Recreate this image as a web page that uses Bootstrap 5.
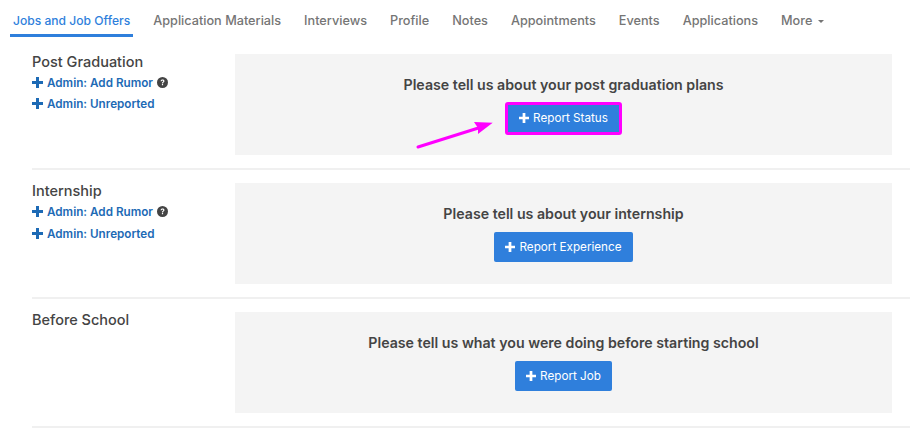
<!DOCTYPE html>
<html lang="en">
<head>
<meta charset="utf-8">
<title>Jobs and Job Offers</title>
<link rel="stylesheet" href="https://cdn.jsdelivr.net/npm/bootstrap@5.3.0/dist/css/bootstrap.min.css">
<style>
html,body{height:447px;overflow:hidden}
body{font-family:"Inter","Liberation Sans",sans-serif;color:#444;background:#fff;font-size:12px}
.tabbar{padding:0 0 0 10px;gap:0;height:37px;flex-wrap:nowrap}
.tabbar .nav-link{font-size:12.7px;font-weight:500;color:#757575;padding:12px 3px 0;height:37px;margin-right:17px;border-bottom:3px solid transparent;white-space:nowrap;line-height:17px}
.tabbar .nav-link.active{font-size:12.1px;color:#2f7fdc;border-bottom-color:#2f7fdc}
.tabbar .caret{display:inline-block;border:3.5px solid transparent;border-top-color:#757575;border-bottom:0;vertical-align:middle;margin-left:2px}
.rowset{padding:17px 8px 0 32px}
.sect{display:flex;border-bottom:2px solid #f0f0f0;padding-bottom:14px;margin-bottom:13px;height:116px}
.sideinfo{width:203px;flex:none}
.sect-title{font-size:14.5px;font-weight:500;color:#444;line-height:17px;margin:-1px 0 4px}
.adminlink{display:block;font-size:11.7px;font-weight:600;color:#1d6ab5;text-decoration:none;line-height:18px;margin-bottom:4px;white-space:nowrap}
.adminlink.snug{margin-bottom:3px}
.adminlink svg{vertical-align:-1px;margin-right:4px}
.adminlink svg.qm{margin:0 0 0 4px;vertical-align:-1px}
.panelbox{flex:none;width:657px;height:101px;background:#f4f4f4;display:flex;flex-direction:column;align-items:center;padding-top:22px;position:relative}
.panelbox h3{font-size:14.2px;font-weight:600;color:#444;line-height:18px;margin:0 0 9px}
.btn-report{background:#2f7fdc;color:#fff;font-size:11.7px;font-weight:400;border:0;border-radius:2px;height:30px;padding:1px 11.5px 0;display:inline-flex;align-items:center;gap:4px;white-space:nowrap}
.btn-report svg{margin-top:-2px}
.btn-report:hover{background:#2f7fdc;color:#fff}
.btn-report.btn-marked{border:3px solid #f0f;border-radius:3px;height:33px;padding:1px 11.5px 0;margin-top:-1px}
.btn-report.btn-marked:hover{border-color:#f0f}
.arrow-note{position:absolute;left:181px;top:64px}
</style>
</head>
<body>
<ul class="nav tabbar">
  <li class="nav-item"><a class="nav-link active" href="#">Jobs and Job Offers</a></li>
  <li class="nav-item"><a class="nav-link" href="#">Application Materials</a></li>
  <li class="nav-item"><a class="nav-link" href="#">Interviews</a></li>
  <li class="nav-item"><a class="nav-link" href="#">Profile</a></li>
  <li class="nav-item"><a class="nav-link" href="#">Notes</a></li>
  <li class="nav-item"><a class="nav-link" href="#">Appointments</a></li>
  <li class="nav-item"><a class="nav-link" href="#">Events</a></li>
  <li class="nav-item"><a class="nav-link" href="#">Applications</a></li>
  <li class="nav-item"><a class="nav-link" href="#">More <span class="caret"></span></a></li>
</ul>
<div class="rowset">
  <section class="sect">
    <div class="sideinfo">
      <h2 class="sect-title">Post Graduation</h2>
      <a class="adminlink snug" href="#"><svg width="11" height="11" viewBox="0 0 11 11"><path d="M4 0h3v4h4v3H7v4H4V7H0V4h4z" fill="currentColor"/></svg>Admin: Add Rumor<svg class="qm" width="11" height="11" viewBox="0 0 11 11"><circle cx="5.5" cy="5.5" r="5.5" fill="#444"/><path d="M3.6 4.3c0-1.2.9-1.8 2-1.8s1.9.6 1.9 1.6c0 1.3-1.4 1.3-1.4 2.3H4.9c0-1.5 1.3-1.5 1.3-2.2 0-.4-.3-.6-.7-.6-.5 0-.7.3-.7.7zM4.9 7h1.2v1.2H4.9z" fill="#fff"/></svg></a>
      <a class="adminlink" href="#"><svg width="11" height="11" viewBox="0 0 11 11"><path d="M4 0h3v4h4v3H7v4H4V7H0V4h4z" fill="currentColor"/></svg>Admin: Unreported</a>
    </div>
    <div class="panelbox">
      <h3>Please tell us about your post graduation plans</h3>
      <button class="btn btn-report btn-marked" type="button"><svg width="10" height="10" viewBox="0 0 11 11"><path d="M4 0h3v4h4v3H7v4H4V7H0V4h4z" fill="currentColor"/></svg>Report Status</button>
      <svg class="arrow-note" width="80" height="34" viewBox="0 0 80 34"><path d="M2 29 L64 9.5" stroke="#f0f" stroke-width="3" stroke-linecap="round"/><path d="M76.7 4.7 L58 4 L62 10 L62 16z" fill="#f0f"/></svg>
    </div>
  </section>
  <section class="sect">
    <div class="sideinfo">
      <h2 class="sect-title">Internship</h2>
      <a class="adminlink" href="#"><svg width="11" height="11" viewBox="0 0 11 11"><path d="M4 0h3v4h4v3H7v4H4V7H0V4h4z" fill="currentColor"/></svg>Admin: Add Rumor<svg class="qm" width="11" height="11" viewBox="0 0 11 11"><circle cx="5.5" cy="5.5" r="5.5" fill="#444"/><path d="M3.6 4.3c0-1.2.9-1.8 2-1.8s1.9.6 1.9 1.6c0 1.3-1.4 1.3-1.4 2.3H4.9c0-1.5 1.3-1.5 1.3-2.2 0-.4-.3-.6-.7-.6-.5 0-.7.3-.7.7zM4.9 7h1.2v1.2H4.9z" fill="#fff"/></svg></a>
      <a class="adminlink" href="#"><svg width="11" height="11" viewBox="0 0 11 11"><path d="M4 0h3v4h4v3H7v4H4V7H0V4h4z" fill="currentColor"/></svg>Admin: Unreported</a>
    </div>
    <div class="panelbox">
      <h3>Please tell us about your internship</h3>
      <button class="btn btn-report" type="button"><svg width="10" height="10" viewBox="0 0 11 11"><path d="M4 0h3v4h4v3H7v4H4V7H0V4h4z" fill="currentColor"/></svg>Report Experience</button>
    </div>
  </section>
  <section class="sect">
    <div class="sideinfo">
      <h2 class="sect-title">Before School</h2>
    </div>
    <div class="panelbox">
      <h3>Please tell us what you were doing before starting school</h3>
      <button class="btn btn-report" type="button"><svg width="10" height="10" viewBox="0 0 11 11"><path d="M4 0h3v4h4v3H7v4H4V7H0V4h4z" fill="currentColor"/></svg>Report Job</button>
    </div>
  </section>
</div>
</body>
</html>
